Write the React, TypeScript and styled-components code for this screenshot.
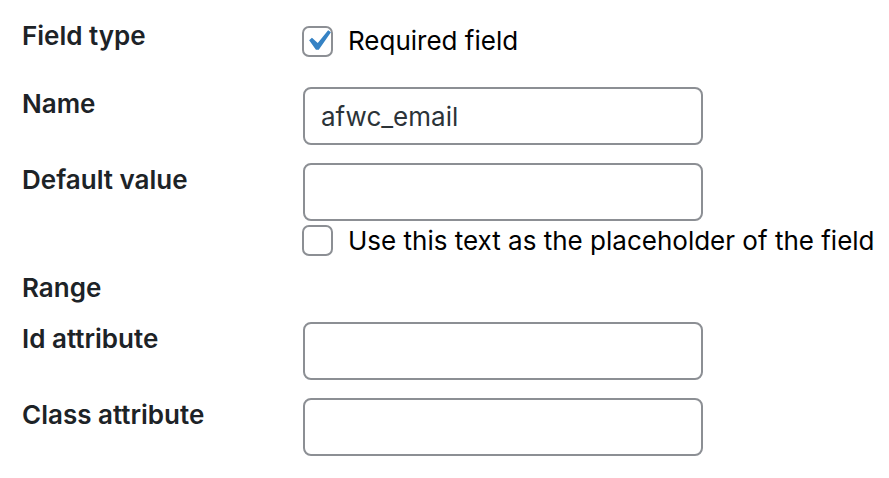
import React, { useState } from 'react';
import styled, { createGlobalStyle } from 'styled-components';

const GlobalStyle = createGlobalStyle`
  html, body {
    margin: 0;
    padding: 0;
    background: #ffffff;
  }
  body {
    font-family: Inter, 'Noto Sans', 'Liberation Sans', sans-serif;
  }
`;

const CheckIcon: React.FC = () => (
  <svg viewBox="0 0 20 20" width="42" height="42" aria-hidden="true">
    <path d="M14.83 4.89l1.34.94-5.81 8.38H9.02L5.78 9.67l1.34-1.25 2.77 2.57z" fill="#3582c4" />
  </svg>
);

const Checkbox: React.FC<{ checked: boolean; onToggle: () => void }> = ({ checked, onToggle }) => (
  <Box role="checkbox" aria-checked={checked} onClick={onToggle}>
    {checked && <CheckIcon />}
  </Box>
);

const App: React.FC = () => {
  const [required, setRequired] = useState(true);
  const [placeholder, setPlaceholder] = useState(false);

  return (
    <>
      <GlobalStyle />
      <FormTable>
        {/* 필드 유형 */}
        <Row $top={19}>
          <Label>Field type</Label>
          <Field $pad={5}>
            <CheckLine>
              <Checkbox checked={required} onToggle={() => setRequired(!required)} />
              <CheckText>Required field</CheckText>
            </CheckLine>
          </Field>
        </Row>

        <Row $top={29}>
          <Label>Name</Label>
          <Field>
            <TextInput defaultValue="afwc_email" />
          </Field>
        </Row>

        <Row $top={18}>
          <Label>Default value</Label>
          <Field>
            <TextInput defaultValue="" />
            <CheckLine $below>
              <Checkbox checked={placeholder} onToggle={() => setPlaceholder(!placeholder)} />
              <CheckText>Use this text as the placeholder of the field</CheckText>
            </CheckLine>
          </Field>
        </Row>

        <Row $top={15}>
          <Label>Range</Label>
          <Field />
        </Row>

        <Row $top={17}>
          <Label>Id attribute</Label>
          <Field>
            <TextInput defaultValue="" />
          </Field>
        </Row>

        <Row $top={18}>
          <Label>Class attribute</Label>
          <Field>
            <TextInput defaultValue="" />
          </Field>
        </Row>
      </FormTable>
    </>
  );
};

export default App;

/* ====================== Styled Components ====================== */

const FormTable = styled.div`
  display: flex;
  flex-direction: column;
  padding-left: 22px;
`;

const Row = styled.div<{ $top: number }>`
  display: grid;
  grid-template-columns: 281px 1fr;
  align-items: start;
  margin-top: ${(p) => p.$top}px;
`;

const Label = styled.div`
  font-size: 26px;
  font-weight: 600;
  line-height: 34px;
  color: #1d2327;
  white-space: nowrap;
`;

const Field = styled.div<{ $pad?: number }>`
  display: flex;
  flex-direction: column;
  padding-top: ${(p) => p.$pad ?? 0}px;
  min-height: 34px;
`;

const CheckLine = styled.label<{ $below?: boolean }>`
  display: flex;
  align-items: center;
  gap: 15px;
  height: ${(p) => (p.$below ? 31 : 34)}px;
  margin-top: ${(p) => (p.$below ? 4 : 0)}px;
  margin-left: -1px;
  cursor: pointer;
`;

const Box = styled.span`
  box-sizing: border-box;
  width: 31px;
  height: 31px;
  flex: none;
  border: 2px solid #8c8f94;
  border-radius: 7px;
  background: #ffffff;
  display: flex;
  align-items: center;
  justify-content: center;
  overflow: hidden;

  svg {
    flex: none;
    margin: -8px;
  }
`;

const CheckText = styled.span`
  font-size: 26px;
  line-height: 34px;
  color: #000000;
  white-space: nowrap;
`;

const TextInput = styled.input`
  box-sizing: border-box;
  width: 400px;
  height: 58px;
  padding: 0 16px;
  border: 2px solid #8c8f94;
  border-radius: 8px;
  background: #ffffff;
  font-family: Inter, 'Noto Sans', 'Liberation Sans', sans-serif;
  font-size: 26px;
  color: #2c3338;
  outline: none;
`;
